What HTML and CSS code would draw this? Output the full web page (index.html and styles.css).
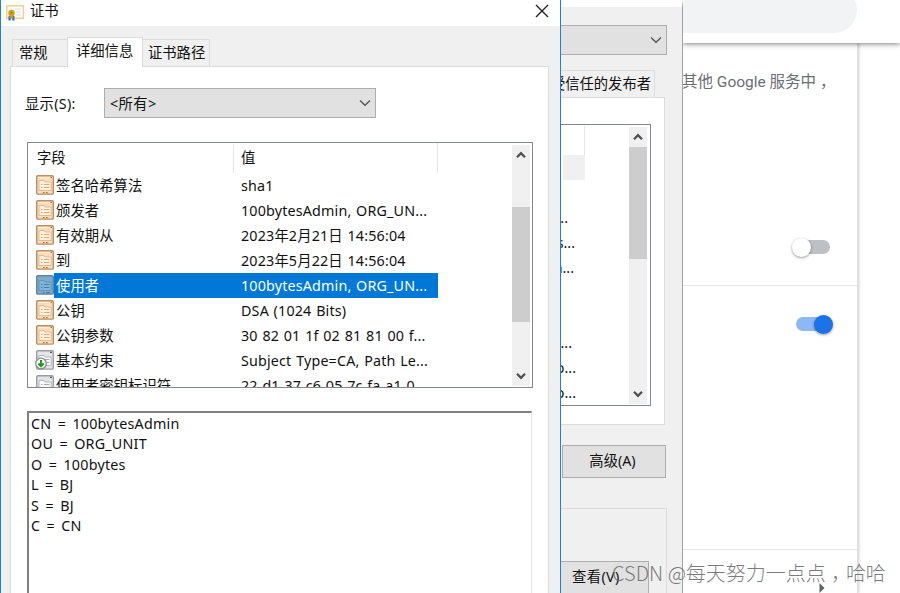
FILE: index.html
```html
<!DOCTYPE html>
<html lang="zh-CN">
<head>
    <meta charset="UTF-8">
    <title>证书</title>
    <meta name="viewport" content="width=device-width, initial-scale=1">
    <link rel="stylesheet" href="styles.css">
</head>
<body>
    <svg class="defs" width="0" height="0">
        <symbol id="field" viewBox="0 0 18 20">
            <rect x="0.7" y="0.7" width="16.6" height="18.4" rx="1.2" fill="#fbdcb9" stroke="#b98d66" stroke-width="1.4"/>
            <path d="M2 2.4h14" stroke="#fff0dc" stroke-width="1"/>
            <path d="M14.5 2.4h1.5M7 17.6h1.6M10 17.6h1.6" stroke="#a9713f" stroke-width="1.3"/>
            <path d="M3 5.5h5l1 1.5h6.2v8.5H3z" fill="#fff0dc" stroke="#dcb48e" stroke-width="0.9"/>
            <path d="M5 9.5h1.5M5 12.5h1.5M8 9.5h5.5M8 12.5h5.5" stroke="#dbab80" stroke-width="1.1"/>
        </symbol>
        <symbol id="field-blue" viewBox="0 0 18 20">
            <rect x="0.7" y="0.7" width="16.6" height="18.4" rx="1.2" fill="#7eabc9" stroke="#5c84a0" stroke-width="1.4"/>
            <path d="M3 5.5h5l1 1.5h6.2v8.5H3z" fill="#80b5da" stroke="#6094b8" stroke-width="0.9"/>
            <path d="M5 9.5h1.5M5 12.5h1.5M8 9.5h5.5M8 12.5h5.5M7 17.6h1.6M10 17.6h4" stroke="#4a80a8" stroke-width="1.1"/>
        </symbol>
        <symbol id="field-gray" viewBox="0 0 18 20">
            <rect x="0.7" y="0.7" width="16.6" height="18.4" rx="1.2" fill="#e2e4e7" stroke="#9b9ea4" stroke-width="1.4"/>
            <path d="M14 2.4h2" stroke="#555" stroke-width="1.3"/>
            <path d="M3 5.5h5l1 1.5h6.2v8.5H3z" fill="#f8f8f8" stroke="#aeb2b8" stroke-width="0.9"/>
            <path d="M5 9.5h1.5M8 9.5h5.5M8 12.5h5.5" stroke="#a5a9b0" stroke-width="1.1"/>
        </symbol>
        <symbol id="arrow" viewBox="0 0 10 8">
            <path d="M1 6.2L5 2.2L9 6.2" fill="none" stroke="#505050" stroke-width="2.3"/>
        </symbol>
        <symbol id="chevron" viewBox="0 0 12 8">
            <path d="M1 1.5L6 6.3L11 1.5" fill="none" stroke="#555" stroke-width="1.3"/>
        </symbol>
    </svg>

    <div class="desktop">
        <div class="cert">
            <div class="titlebar">
                <svg class="cert-icon" width="19" height="17" viewBox="0 0 19 17">
                    <rect x="0.8" y="1.8" width="16.6" height="12.5" fill="#fdfcf8" stroke="#efcf9f" stroke-width="1.5"/>
                    <path d="M9 5h6M10 8h5M10 11h5" stroke="#e4e7f0" stroke-width="1.5"/>
                    <path d="M3.6 12v4.5M7.4 12v4.5" stroke="#2b70d0" stroke-width="2.2"/>
                    <path d="M3.5 10h4v4h-4z" fill="#c8920f"/>
                    <circle cx="5.5" cy="9" r="3.2" fill="#d6a016"/>
                    <circle cx="5.5" cy="9" r="1.2" fill="#b98a10"/>
                </svg>
                <span class="title">证书</span>
                <svg class="close" width="14" height="14" viewBox="0 0 14 14">
                    <path d="M1 1L13 13M13 1L1 13" stroke="#222" stroke-width="1.4"/>
                </svg>
            </div>
            <div class="tabs">
                <div class="tab general">常规</div>
                <div class="tab active">详细信息</div>
                <div class="tab">证书路径</div>
            </div>
            <div class="pane">
                <div class="show-row">
                    <span class="show-label">显示(S):</span>
                    <div class="select">
                        <span>&lt;所有&gt;</span>
                        <svg width="12" height="8"><use href="#chevron"/></svg>
                    </div>
                </div>
                <div class="list">
                    <div class="rows">
                        <div class="head"><span class="c1">字段</span><span class="c2">值</span></div>
                        <div class="row"><svg><use href="#field"/></svg><span class="name">签名哈希算法</span><span class="value">sha1</span></div>
                        <div class="row"><svg><use href="#field"/></svg><span class="name">颁发者</span><span class="value">100bytesAdmin, ORG_UN...</span></div>
                        <div class="row"><svg><use href="#field"/></svg><span class="name">有效期从</span><span class="value">2023年2月21日 14:56:04</span></div>
                        <div class="row"><svg><use href="#field"/></svg><span class="name">到</span><span class="value">2023年5月22日 14:56:04</span></div>
                        <div class="row selected"><svg><use href="#field-blue"/></svg><span class="name">使用者</span><span class="value">100bytesAdmin, ORG_UN...</span></div>
                        <div class="row"><svg><use href="#field"/></svg><span class="name">公钥</span><span class="value">DSA (1024 Bits)</span></div>
                        <div class="row"><svg><use href="#field"/></svg><span class="name">公钥参数</span><span class="value">30 82 01 1f 02 81 81 00 f...</span></div>
                        <div class="row">
                            <svg viewBox="0 0 18 20">
                                <use href="#field-gray" width="18" height="20"/>
                                <circle cx="5" cy="13.5" r="5.3" fill="#fff" stroke="#888" stroke-width="1.3"/>
                                <path d="M5 10v6M2.3 13.5L5 16.3L7.7 13.5" fill="none" stroke="#1c9e1c" stroke-width="2"/>
                            </svg>
                            <span class="name">基本约束</span><span class="value">Subject Type=CA, Path Le...</span>
                        </div>
                        <div class="row"><svg><use href="#field-gray"/></svg><span class="name">使用者密钥标识符</span><span class="value">22 d1 37 c6 05 7c fa a1 0</span></div>
                    </div>
                    <div class="scrollbar">
                        <svg width="10" height="8"><use href="#arrow"/></svg>
                        <div class="thumb"></div>
                        <svg class="down" width="10" height="8"><use href="#arrow"/></svg>
                    </div>
                </div>
                <div class="detail">
                    <div>CN = 100bytesAdmin</div>
                    <div>OU = ORG_UNIT</div>
                    <div>O = 100bytes</div>
                    <div>L = BJ</div>
                    <div>S = BJ</div>
                    <div>C = CN</div>
                </div>
            </div>
        </div>

        <div class="manager">
            <div class="m-select"><svg width="12" height="8"><use href="#chevron"/></svg></div>
            <div class="m-tab">受信任的发布者</div>
            <div class="m-pane">
                <div class="m-list">
                    <div class="m-rows">
                        <div class="m-head"></div>
                        <div class="m-row current"></div>
                        <div class="m-row"></div>
                        <div class="m-row w7">...</div>
                        <div class="m-row w14">s...</div>
                        <div class="m-row w13">n...</div>
                        <div class="m-row"></div>
                        <div class="m-row"></div>
                        <div class="m-row w11">...</div>
                        <div class="m-row w15">o...</div>
                        <div class="m-row w15">o...</div>
                    </div>
                    <div class="scrollbar">
                        <svg width="10" height="8"><use href="#arrow"/></svg>
                        <div class="thumb"></div>
                        <svg class="down" width="10" height="8"><use href="#arrow"/></svg>
                    </div>
                </div>
            </div>
            <div class="button">高级(A)</div>
            <div class="group">
                <div class="button view">查看(V)</div>
            </div>
        </div>

        <div class="browser">
            <div class="toolbar"><div class="omnibox"></div></div>
            <div class="card">
                <div class="setting first">
                    <div class="setting-text">其他 Google 服务中<span class="comma">，</span></div>
                    <div class="toggle"></div>
                </div>
                <div class="setting second"><div class="toggle on"></div></div>
                <div class="setting">
                    <svg class="more" width="6" height="10" viewBox="0 0 6 10"><path d="M0.5 0L5.5 5L0.5 10z" fill="#5f6368"/></svg>
                </div>
            </div>
        </div>
        <div class="watermark">CSDN @每天努力一点点<span class="comma">，</span>哈哈</div>
    </div>
</body>
</html>
```

FILE: styles.css
```css
* {
    box-sizing: border-box;
}

body {
    margin: 0;
    font-family: "Noto Sans", "Noto Sans CJK SC", sans-serif;
    font-size: 14.3px;
    color: #111;
    background: #fff;
}

.defs {
    display: block;
    height: 0;
}

.desktop {
    position: relative;
    display: flex;
    width: 900px;
    height: 593px;
    overflow: hidden;
    white-space: nowrap;
}

/* certificate dialog */
.cert {
    width: 561px;
    height: 593px;
    display: flex;
    flex-direction: column;
    background: #f0f0f0;
    border-left: 1px solid #1883d7;
    border-right: 1px solid #1883d7;
}

.titlebar {
    height: 26px;
    padding: 0 11px 4px 5px;
    display: flex;
    align-items: center;
    background: #fff;
}

.cert-icon {
    margin-top: 2px;
}

.title {
    margin-left: 5px;
    padding-bottom: 3px;
}

.close {
    margin-left: auto;
}

.tabs {
    display: flex;
    align-items: flex-end;
    height: 40px;
    padding-left: 11px;
}

.tab {
    height: 27px;
    width: 67px;
    padding-left: 5px;
    line-height: 25px;
    border: 1px solid #dcdcdc;
    border-left: none;
    border-bottom: none;
}

.general {
    width: 55px;
    padding-left: 6px;
    border-left: 1px solid #dcdcdc;
    border-right: none;
}

.active {
    width: 76px;
    height: 30px;
    padding-left: 8px;
    line-height: 25px;
    background: #fff;
    border-left: 1px solid #dcdcdc;
    margin-bottom: -1px;
    z-index: 1;
}

.pane {
    flex: 1;
    display: flex;
    flex-direction: column;
    margin: 0 11px 0 9px;
    padding: 21px 14px 0 16px;
    background: #fff;
    border: 1px solid #dcdcdc;
    border-bottom: none;
}

.show-row {
    display: flex;
    height: 30px;
    align-items: center;
    margin-left: -2px;
}

.show-label {
    width: 79px;
    padding-bottom: 2px;
    letter-spacing: 0.3px;
}

.select {
    width: 272px;
    height: 30px;
    padding: 0 4px 0 5px;
    display: flex;
    align-items: center;
    justify-content: space-between;
    background: #e1e1e1;
    border: 1px solid #adadad;
}

.select span {
    padding-bottom: 2px;
    letter-spacing: 0.4px;
}

.list {
    display: flex;
    justify-content: space-between;
    width: 506px;
    height: 246px;
    margin-top: 24px;
    padding: 0 2px 1px 7px;
    border: 1px solid #828790;
    overflow: hidden;
}

.rows {
    width: 403px;
}

.head {
    display: flex;
    height: 30px;
    padding-top: 2px;
    line-height: 26px;
    border-right: 1px solid #e5e5e5;
}

.c1 {
    width: 199px;
    padding-left: 2px;
    border-right: 1px solid #e5e5e5;
}

.c2 {
    padding-left: 7px;
}

.row {
    display: flex;
    align-items: center;
    height: 25px;
    line-height: 25px;
}

.row svg {
    width: 18px;
    height: 20px;
    margin: -1px 0 0 1px;
    flex: none;
    overflow: visible;
}

.name {
    width: 180px;
    padding-left: 2px;
    letter-spacing: 0.1px;
}

.value {
    width: 204px;
    padding-left: 7px;
    letter-spacing: 0.17px;
    word-spacing: 0.8px;
}

.selected .name,
.selected .value {
    background: #0078d7;
    color: #fff;
}

.scrollbar {
    width: 18px;
    margin-top: 2px;
    display: flex;
    flex-direction: column;
    align-items: center;
    background: #f0f0f0;
}

.scrollbar svg {
    margin-top: 6px;
}

.scrollbar .down {
    margin-top: auto;
    margin-bottom: 6px;
    transform: scaleY(-1);
}

.thumb {
    width: 18px;
    height: 115px;
    margin-top: 48px;
    background: #cdcdcd;
}

.detail {
    flex: 1;
    width: 505px;
    margin-top: 23px;
    padding: 1px 1px 0 2px;
    line-height: 20.4px;
    letter-spacing: 0.22px;
    word-spacing: 2.4px;
    border-top: 2px solid #808080;
    border-left: 2px solid #808080;
    border-right: 1px solid #e3e3e3;
}

/* certificate manager behind the dialog */
.manager {
    width: 122px;
    display: flex;
    flex-direction: column;
    background: #f0f0f0;
    border-top: 7px solid #fff;
    border-right: 1px solid #a3a3a3;
}

.m-select {
    width: 106px;
    height: 30px;
    flex: none;
    margin-top: 18px;
    padding-right: 4px;
    display: flex;
    align-items: center;
    justify-content: flex-end;
    background: #e1e1e1;
    border: 1px solid #adadad;
    border-left: none;
}

.m-tab {
    width: 94px;
    height: 27px;
    flex: none;
    margin-top: 15px;
    padding-right: 3px;
    display: flex;
    justify-content: flex-end;
    line-height: 26px;
    border: 1px solid #dcdcdc;
    border-left: none;
    border-bottom: none;
    overflow: hidden;
}

.m-pane {
    width: 104px;
    height: 328px;
    padding-top: 26px;
    background: #fff;
    border: 1px solid #dcdcdc;
    border-left: none;
    flex: none;
}

.m-list {
    display: flex;
    justify-content: space-between;
    width: 90px;
    height: 282px;
    padding: 1px 3px 1px 0;
    border: 1px solid #828790;
    border-left: none;
    overflow: hidden;
}

.m-head {
    width: 24px;
    height: 29px;
    border-right: 1px solid #e5e5e5;
}

.m-row {
    height: 25px;
    display: flex;
    justify-content: flex-end;
    line-height: 25px;
    overflow: hidden;
}

.m-row.current {
    width: 22px;
    margin-left: 2px;
    background: #f0f0f0;
}

.w7 { width: 7px; }
.w11 { width: 11px; }
.w13 { width: 13px; }
.w14 { width: 14px; }
.w15 { width: 15px; }

.m-list .scrollbar {
    margin-top: 1px;
}

.m-list .thumb {
    height: 112px;
    margin-top: 6px;
}

.button {
    width: 104px;
    height: 33px;
    flex: none;
    margin: 20px 0 0 1px;
    padding-right: 3px;
    text-align: center;
    line-height: 30px;
    background: #e1e1e1;
    border: 1px solid #adadad;
}

.group {
    flex: 1;
    min-height: 0;
    width: 106px;
    margin-top: 30px;
    border: 1px solid #dcdcdc;
    border-left: none;
    border-bottom: none;
}

.view {
    width: 88px;
    height: 36px;
    margin: 52px 0 0;
    padding-left: 11px;
    text-align: left;
    letter-spacing: 0.4px;
    border-left: none;
}

/* browser settings page */
.browser {
    flex: 1;
    display: flex;
    flex-direction: column;
    overflow: hidden;
}

.toolbar {
    height: 43px;
    background: #fff;
    box-shadow: 0 1px 5px rgba(0, 0, 0, 0.5);
    z-index: 1;
}

.omnibox {
    width: 174px;
    height: 46px;
    margin-top: -13px;
    background: #f1f3f4;
    border-radius: 0 23px 23px 0;
}

.card {
    flex: 1;
    width: 175px;
    background: #fff;
    border-right: 1px solid #dcdee0;
    box-shadow: 1px 0 3px rgba(60, 64, 67, 0.25);
}

.setting {
    display: flex;
    flex-direction: column;
}

.first {
    height: 243px;
    border-bottom: 1px solid #ebebeb;
}

.second {
    height: 264px;
    padding-top: 31px;
    border-bottom: 1px solid #ebebeb;
}

.setting-text {
    height: 154px;
    padding-top: 28px;
    margin-left: -1px;
    font-family: Roboto, "Noto Sans CJK SC", sans-serif;
    font-size: 15.5px;
    line-height: 22px;
    color: #6a6e73;
}

.comma {
    padding-left: 0.25em;
    margin-right: -0.25em;
}

.first .toggle {
    margin-top: 43px;
}

.toggle {
    display: flex;
    align-items: center;
    width: 35px;
    height: 14px;
    margin-left: 112px;
    border-radius: 7px;
    background: #bdc1c6;
}

.toggle::before {
    content: "";
    width: 19px;
    height: 19px;
    flex: none;
    margin-left: -3px;
    border-radius: 50%;
    background: #fff;
    box-shadow: 0 1px 3px rgba(0, 0, 0, 0.4);
}

.toggle.on {
    margin-left: 113px;
    background: #8cb8f6;
}

.toggle.on::before {
    margin-left: 18px;
    background: #1a73e8;
}

.more {
    margin: 33px 0 0 136px;
}

.watermark {
    position: absolute;
    left: 612px;
    top: 559px;
    font-family: "Noto Sans CJK SC", sans-serif;
    font-weight: 300;
    font-size: 20px;
    line-height: 27px;
    color: rgba(100, 100, 100, 0.85);
}
```
